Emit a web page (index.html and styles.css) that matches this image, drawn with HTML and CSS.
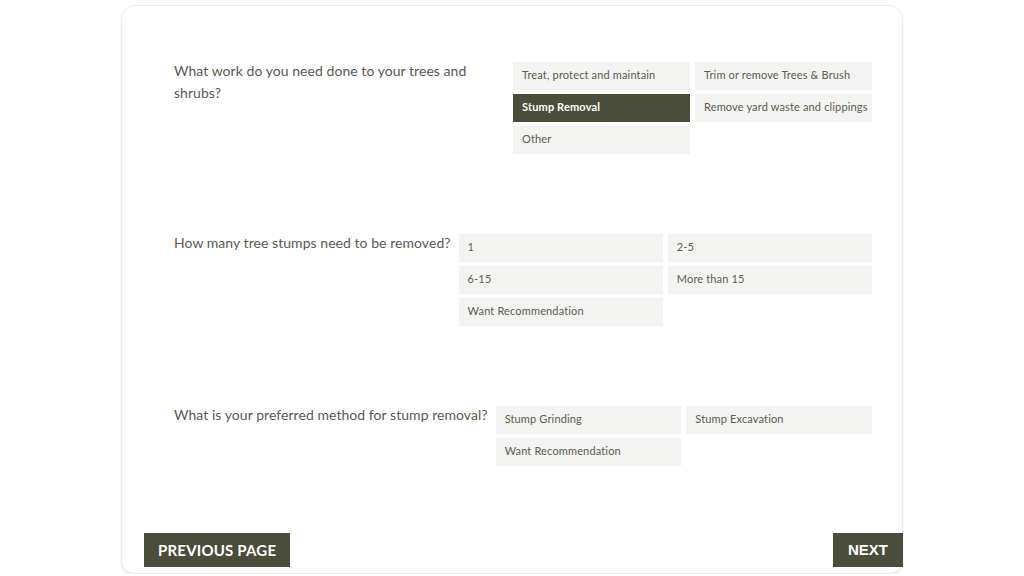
FILE: index.html
```html
<!DOCTYPE html>
<html lang="en">
<head>
    <meta charset="UTF-8">
    <meta name="viewport" content="width=device-width, initial-scale=1.0">
    <title>Tree Service Quote</title>
    <link rel="stylesheet" href="styles.css">
</head>
<body>
    <div class="card">
        <div class="questions">
            <!-- Pergunta 1 -->
            <div class="question">
                <div class="label">What work do you need done to your trees and shrubs?</div>
                <div class="options">
                    <div class="option">Treat, protect and maintain</div>
                    <div class="option">Trim or remove Trees &amp; Brush</div>
                    <div class="option selected">Stump Removal</div>
                    <div class="option">Remove yard waste and clippings</div>
                    <div class="option">Other</div>
                </div>
            </div>

            <!-- Pergunta 2 -->
            <div class="question">
                <div class="label">How many tree stumps need to be removed?</div>
                <div class="options">
                    <div class="option">1</div>
                    <div class="option">2-5</div>
                    <div class="option">6-15</div>
                    <div class="option">More than 15</div>
                    <div class="option">Want Recommendation</div>
                </div>
            </div>

            <!-- Pergunta 3 -->
            <div class="question">
                <div class="label">What is your preferred method for stump removal?</div>
                <div class="options">
                    <div class="option">Stump Grinding</div>
                    <div class="option">Stump Excavation</div>
                    <div class="option">Want Recommendation</div>
                </div>
            </div>
        </div>

        <div class="footer">
            <button class="btn">PREVIOUS PAGE</button>
            <button class="btn btn-next">NEXT</button>
        </div>
    </div>
</body>
</html>
```

FILE: styles.css
```css
* {
    margin: 0;
    padding: 0;
    box-sizing: border-box;
}
body {
    font-family: Lato, "Open Sans", sans-serif;
    background-color: #ffffff;
    color: #555555;
}
.card {
    width: 782px;
    height: 569px;
    margin: 5px auto 0;
    border: 1px solid #ececec;
    border-radius: 14px;
    box-shadow: 0 2px 3px rgba(0, 0, 0, 0.08);
    background-color: #ffffff;
    display: flex;
    flex-direction: column;
}
.questions {
    display: flex;
    flex-direction: column;
    gap: 78px;
    padding: 54px 30px 0 52px;
}
.question {
    display: flex;
    align-items: flex-start;
    gap: 8px;
}
.label {
    flex: 0 1 auto;
    max-width: 331px;
    font-size: 14px;
    line-height: 22px;
    letter-spacing: 0.05px;
    color: #5a5a53;
}
.options {
    flex: 1;
    display: grid;
    grid-template-columns: 1fr 1fr;
    column-gap: 5px;
    row-gap: 4px;
    margin-top: 2px;
}
.option {
    height: 28px;
    line-height: 25px;
    padding-left: 9px;
    background-color: #f3f3f1;
    font-size: 11px;
    letter-spacing: 0.15px;
    color: #5c5c52;
    white-space: nowrap;
}
.option.selected {
    background-color: #4b4d3b;
    color: #ffffff;
    font-weight: bold;
}
.footer {
    margin-top: auto;
    display: flex;
    justify-content: space-between;
    padding: 0 0 6px 22px;
}
.btn {
    height: 34px;
    padding: 0 14px 1px;
    border: none;
    background-color: #4b4d3b;
    color: #ffffff;
    font-family: Lato, sans-serif;
    font-size: 15px;
    font-weight: bold;
    letter-spacing: 0.2px;
}
.btn-next {
    margin-right: -1px;
    padding: 0 15px 1px;
    font-family: "Liberation Sans", Arial, sans-serif;
    letter-spacing: 0;
}
```
